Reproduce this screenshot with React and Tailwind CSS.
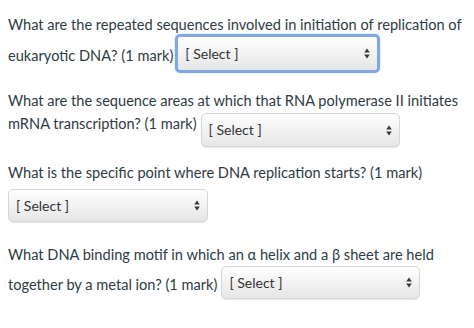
import React from 'react';

const font = { fontFamily: 'Lato, "Open Sans", sans-serif' };

function Arrows() {
  return (
    <svg width="6" height="11" viewBox="0 0 6 11" className="shrink-0">
      <path d="M3 0.5 L5.8 4.4 L0.2 4.4 Z" fill="#3a3a3a" />
      <path d="M3 10.5 L5.8 6.6 L0.2 6.6 Z" fill="#3a3a3a" />
    </svg>
  );
}

function Select({ focused, className = '' }) {
  return (
    <div
      className={`flex shrink-0 items-center justify-between rounded-[5px] bg-gradient-to-b from-white to-[#e6e6e6] pl-[7px] pr-[7px] text-[14px] leading-none text-[#333] ${
        focused
          ? 'border-[3px] border-[#80a8e2] pl-[6px] shadow-[0_0_2px_rgba(80,130,220,0.45)]'
          : 'border border-[#d6d6d6] shadow-[0_1px_1px_rgba(0,0,0,0.1)]'
      } ${className}`}
    >
      <span>[ Select ]</span>
      <Arrows />
    </div>
  );
}

export default function App() {
  return (
    <div
      className="w-[474px] h-[328px] overflow-hidden bg-white px-2 pt-[14px] text-[14.6px] leading-[22px] text-[#2d3b45]"
      style={font}
    >
      {/* question 1 */}
      <p className="whitespace-nowrap">
        What are the repeated sequences involved in initiation of replication of
      </p>
      <div className="-mt-[2px] flex items-start">
        <span className="mt-[11px] whitespace-nowrap">eukaryotic DNA? (1 mark)</span>
        <Select focused className="ml-[2px] h-[39px] w-[205px]" />
      </div>

      {/* question 2 */}
      <p className="mt-[17px] whitespace-nowrap">
        What are the sequence areas at which that RNA polymerase II initiates
      </p>
      <div className="mt-[1px] flex items-start">
        <span className="whitespace-nowrap">mRNA transcription? (1 mark)</span>
        <Select className="ml-[4px] h-[34px] w-[199px]" />
      </div>

      {/* question 3 */}
      <p className="mt-[15px] whitespace-nowrap">
        What is the specific point where DNA replication starts? (1 mark)
      </p>
      <Select className="mt-[5px] h-[33px] w-[200px]" />

      {/* question 4 */}
      <p className="mt-[22px] whitespace-nowrap">
        What DNA binding motif in which an α helix and a β sheet are held
      </p>
      <div className="flex items-start">
        <span className="mt-[8px] whitespace-nowrap">together by a metal ion? (1 mark)</span>
        <Select className="ml-[4px] h-[33px] w-[199px]" />
      </div>
    </div>
  );
}
